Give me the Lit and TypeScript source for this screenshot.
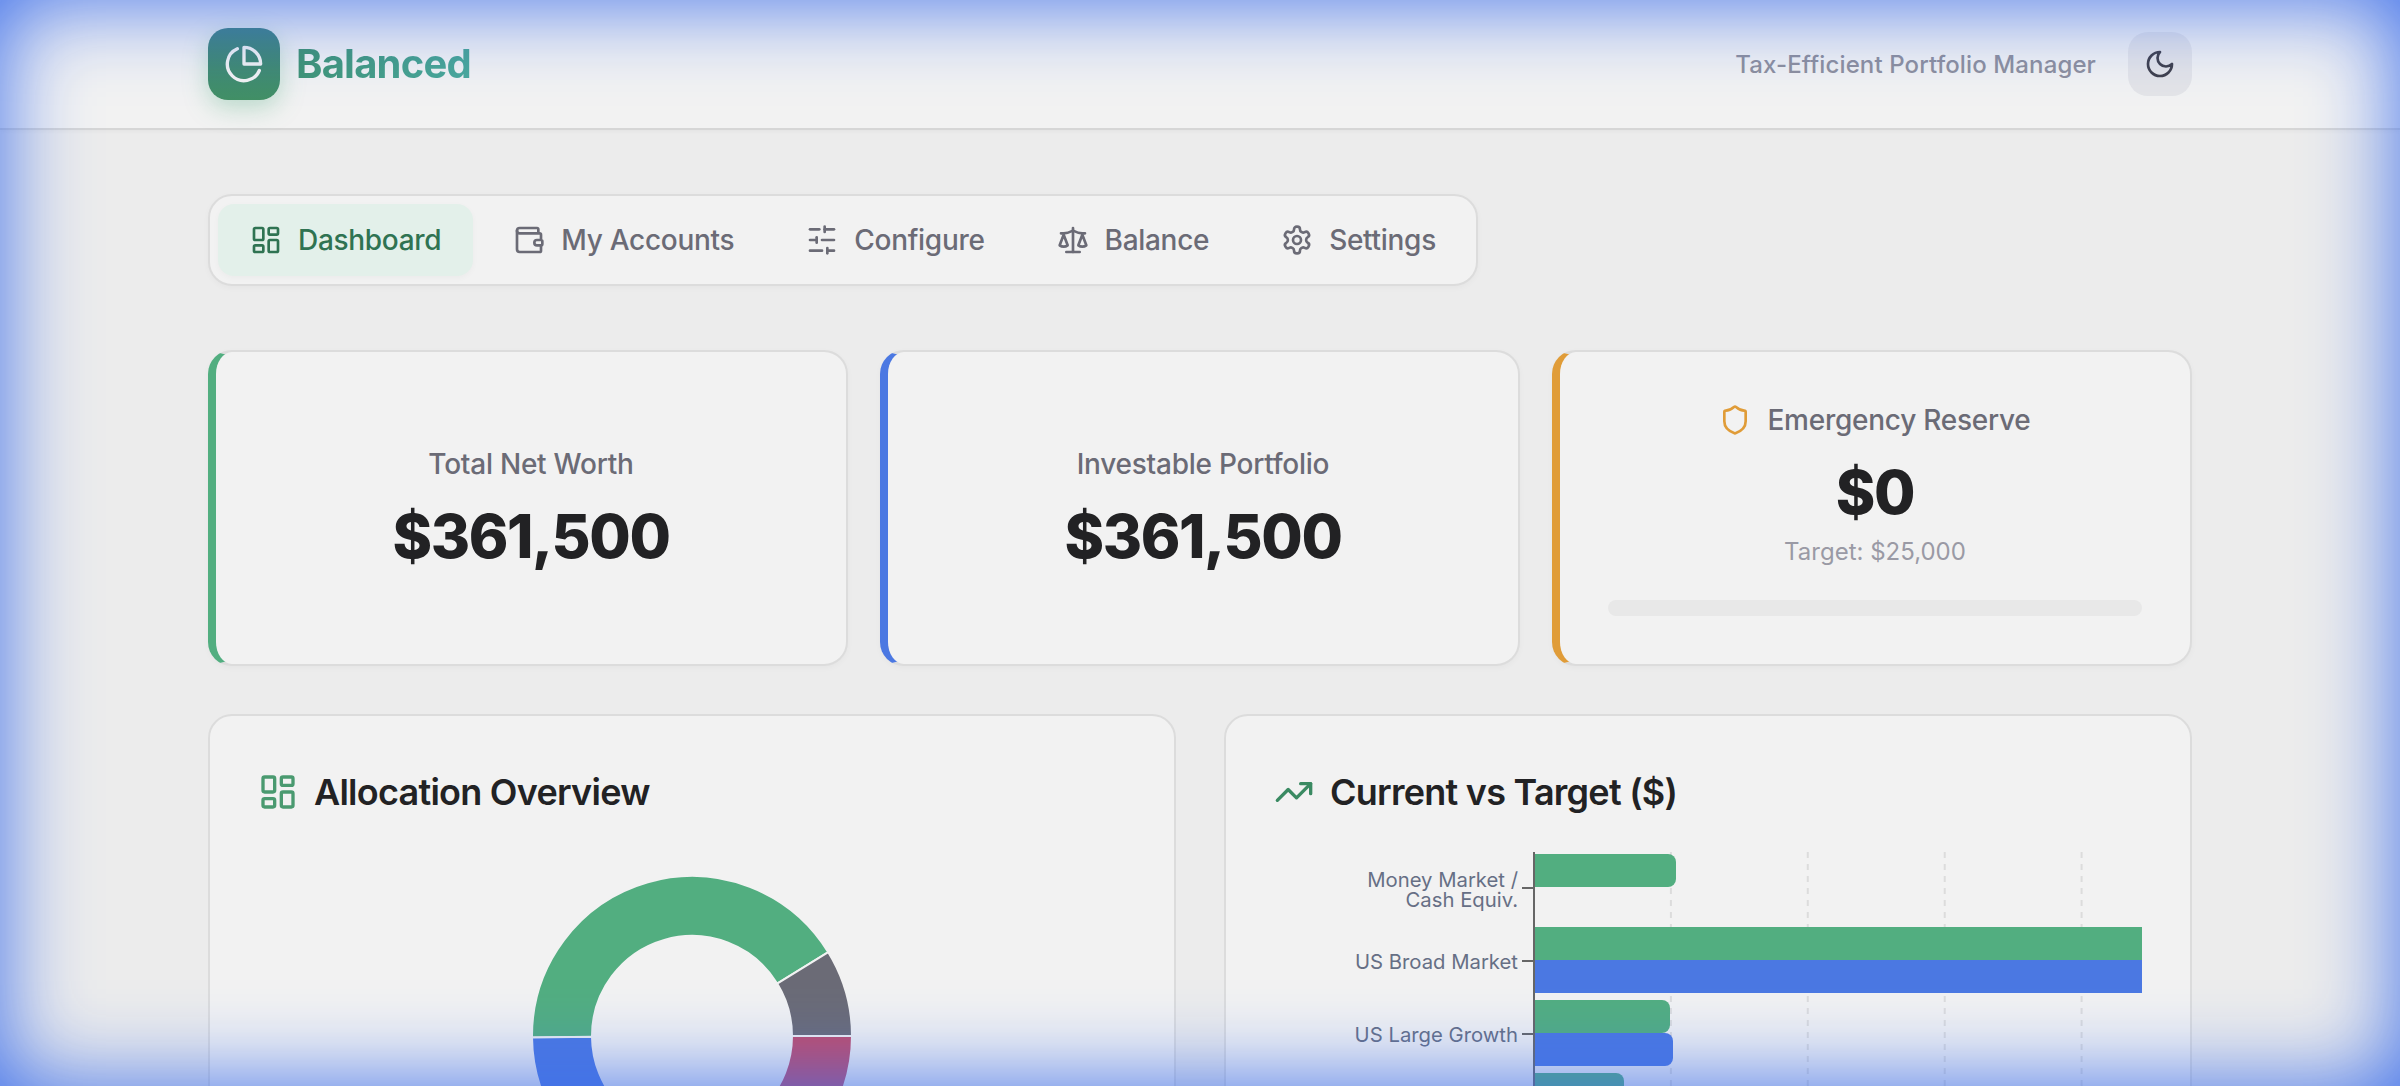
import { LitElement, css, html, svg } from 'lit';
import { customElement } from 'lit/decorators.js';

const ICONS = {
  dashboard: svg`<rect width="7" height="9" x="3" y="3" rx="1" /><rect width="7" height="5" x="14" y="3" rx="1" /><rect width="7" height="9" x="14" y="12" rx="1" /><rect width="7" height="5" x="3" y="16" rx="1" />`,
  wallet: svg`<path d="M19 7V4a1 1 0 0 0-1-1H5a2 2 0 0 0 0 4h15a1 1 0 0 1 1 1v4h-3a2 2 0 0 0 0 4h3a1 1 0 0 0 1-1v-2a1 1 0 0 0-1-1" /><path d="M3 5v14a2 2 0 0 0 2 2h15a1 1 0 0 0 1-1v-4" />`,
  sliders: svg`<line x1="21" x2="14" y1="4" y2="4" /><line x1="10" x2="3" y1="4" y2="4" /><line x1="21" x2="12" y1="12" y2="12" /><line x1="8" x2="3" y1="12" y2="12" /><line x1="21" x2="16" y1="20" y2="20" /><line x1="12" x2="3" y1="20" y2="20" /><line x1="14" x2="14" y1="2" y2="6" /><line x1="8" x2="8" y1="10" y2="14" /><line x1="16" x2="16" y1="18" y2="22" />`,
  scale: svg`<path d="m16 16 3-8 3 8c-.87.65-1.92 1-3 1s-2.13-.35-3-1Z" /><path d="m2 16 3-8 3 8c-.87.65-1.92 1-3 1s-2.13-.35-3-1Z" /><path d="M7 21h10" /><path d="M12 3v18" /><path d="M3 7h2c2 0 5-1 7-2 2 1 5 2 7 2h2" />`,
  settings: svg`<path d="M12.22 2h-.44a2 2 0 0 0-2 2v.18a2 2 0 0 1-1 1.73l-.43.25a2 2 0 0 1-2 0l-.15-.08a2 2 0 0 0-2.73.73l-.22.38a2 2 0 0 0 .73 2.73l.15.1a2 2 0 0 1 1 1.72v.51a2 2 0 0 1-1 1.74l-.15.09a2 2 0 0 0-.73 2.73l.22.38a2 2 0 0 0 2.73.73l.15-.08a2 2 0 0 1 2 0l.43.25a2 2 0 0 1 1 1.73V20a2 2 0 0 0 2 2h.44a2 2 0 0 0 2-2v-.18a2 2 0 0 1 1-1.73l.43-.25a2 2 0 0 1 2 0l.15.08a2 2 0 0 0 2.73-.73l.22-.39a2 2 0 0 0-.73-2.73l-.15-.08a2 2 0 0 1-1-1.74v-.5a2 2 0 0 1 1-1.74l.15-.09a2 2 0 0 0 .73-2.73l-.22-.38a2 2 0 0 0-2.73-.73l-.15.08a2 2 0 0 1-2 0l-.43-.25a2 2 0 0 1-1-1.73V4a2 2 0 0 0-2-2z" /><circle cx="12" cy="12" r="3" />`,
  moon: svg`<path d="M12 3a6 6 0 0 0 9 9 9 9 0 1 1-9-9Z" />`,
  shield: svg`<path d="M20 13c0 5-3.5 7.5-7.66 8.95a1 1 0 0 1-.67-.01C7.5 20.5 4 18 4 13V6a1 1 0 0 1 1-1c2 0 4.5-1.2 6.24-2.72a1.17 1.17 0 0 1 1.52 0C14.51 3.81 17 5 19 5a1 1 0 0 1 1 1z" />`,
  trending: svg`<polyline points="22 7 13.5 15.5 8.5 10.5 2 17" /><polyline points="16 7 22 7 22 13" />`,
  pie: svg`<path d="M21.21 15.89A10 10 0 1 1 8 2.83" /><path d="M22 12A10 10 0 0 0 12 2v10z" />`,
};

type IconName = keyof typeof ICONS;

const icon = (name: IconName, size: number) =>
  html`<svg
    class="icon"
    width=${size}
    height=${size}
    viewBox="0 0 24 24"
    fill="none"
    stroke="currentColor"
    stroke-width="2"
    stroke-linecap="round"
    stroke-linejoin="round"
  >
    ${ICONS[name]}
  </svg>`;

const NAV: { label: string; icon: IconName; active?: boolean }[] = [
  { label: 'Dashboard', icon: 'dashboard', active: true },
  { label: 'My Accounts', icon: 'wallet' },
  { label: 'Configure', icon: 'sliders' },
  { label: 'Balance', icon: 'scale' },
  { label: 'Settings', icon: 'settings' },
];

const GREEN = '#52ae80';
const BLUE = '#4b78e2';

// start and end angle in degrees, clockwise from north
const SLICES = [
  { color: GREEN, from: -90.5, to: 58.4 },
  { color: '#6b6b76', from: 58.4, to: 90 },
  { color: '#c04d6c', from: 90, to: 180 },
  { color: BLUE, from: 180, to: 269.5 },
];

const ROWS = [
  { label: ['Money Market /', 'Cash Equiv.'], current: 142, target: 0 },
  { label: ['US Broad Market'], current: 760, target: 760 },
  { label: ['US Large Growth'], current: 136, target: 139 },
  { label: [], current: 90, target: 66 },
];

const AXIS_X = 260;
const PLOT_W = 608;
const BAND = 73;
const BAR_H = 33;

const polar = (r: number, deg: number) => {
  const a = ((deg - 90) * Math.PI) / 180;
  return `${200 + r * Math.cos(a)} ${200 + r * Math.sin(a)}`;
};

const slicePath = (from: number, to: number) => {
  const R = 160;
  const r = 100;
  const large = to - from > 180 ? 1 : 0;
  return `M${polar(R, from)}A${R} ${R} 0 ${large} 1 ${polar(R, to)}L${polar(r, to)}A${r} ${r} 0 ${large} 0 ${polar(r, from)}Z`;
};

const barPath = (y: number, w: number) => {
  if (w >= PLOT_W) {
    return `M${AXIS_X} ${y}h${PLOT_W}v${BAR_H}h${-PLOT_W}Z`;
  }
  return `M${AXIS_X} ${y}h${w - 8}a8 8 0 0 1 8 8v${BAR_H - 16}a8 8 0 0 1-8 8h${8 - w}Z`;
};

@customElement('app-root')
export class AppRoot extends LitElement {
  renderDonut() {
    return html`<svg class="donut" width="400" height="400" viewBox="0 0 400 400">
      ${SLICES.map(
        (s) =>
          svg`<path d=${slicePath(s.from, s.to)} fill=${s.color} stroke="#f2f2f2" stroke-width="2" />`,
      )}
    </svg>`;
  }

  renderBars() {
    const height = ROWS.length * BAND + 10;
    return html`<svg class="bars" width="868" height=${height} viewBox="0 0 868 ${height}">
      ${[1, 2, 3, 4].map((i) => {
        const x = AXIS_X + i * 136.9;
        return svg`<line x1=${x} x2=${x} y1="0" y2=${height} stroke="#dcdcdc" stroke-width="2" stroke-dasharray="6 6" />`;
      })}
      ${ROWS.map((row, i) => {
        const top = i * BAND;
        const mid = top + 36;
        const textY = row.label.length > 1 ? mid - 1 : mid + 8;
        return svg`
          ${row.current ? svg`<path d=${barPath(top + 2, row.current)} fill=${GREEN} />` : ''}
          ${row.target ? svg`<path d=${barPath(top + 2 + BAR_H, row.target)} fill=${BLUE} />` : ''}
          <line x1=${AXIS_X - 12} x2=${AXIS_X} y1=${mid} y2=${mid} stroke="#666" stroke-width="2" />
          <text class="tick" y=${textY}>
            ${row.label.map(
              (line, n) => svg`<tspan x=${AXIS_X - 16} dy=${n ? 20 : 0}>${line}</tspan>`,
            )}
          </text>
        `;
      })}
      <line x1=${AXIS_X} x2=${AXIS_X} y1="0" y2=${height} stroke="#666" stroke-width="2" />
    </svg>`;
  }

  render() {
    return html`
      <header class="header">
        <div class="brand">
          <div class="brand__logo">${icon('pie', 40)}</div>
          <span class="brand__name">Balanced</span>
        </div>
        <div class="header__right">
          <span class="header__tagline">Tax-Efficient Portfolio Manager</span>
          <button class="theme-btn">${icon('moon', 32)}</button>
        </div>
      </header>

      <main class="main">
        <nav class="nav">
          ${NAV.map(
            (item) =>
              html`<a class="nav__item ${item.active ? 'nav__item--active' : ''}"
                >${icon(item.icon, 32)}<span>${item.label}</span></a
              >`,
          )}
        </nav>

        <section class="stats">
          <div class="stat stat--green">
            <div class="stat__label">Total Net Worth</div>
            <div class="stat__value">$361,500</div>
          </div>
          <div class="stat stat--blue">
            <div class="stat__label">Investable Portfolio</div>
            <div class="stat__value">$361,500</div>
          </div>
          <div class="stat stat--amber">
            <div class="stat__label stat__label--icon">${icon('shield', 32)}Emergency Reserve</div>
            <div class="stat__value">$0</div>
            <div class="stat__target">Target: $25,000</div>
            <div class="progress"></div>
          </div>
        </section>

        <section class="charts">
          <div class="panel">
            <h2 class="panel__title">
              <span class="panel__icon">${icon('dashboard', 40)}</span>Allocation Overview
            </h2>
            ${this.renderDonut()}
          </div>
          <div class="panel">
            <h2 class="panel__title">
              <span class="panel__icon panel__icon--dark">${icon('trending', 40)}</span>Current vs
              Target ($)
            </h2>
            <div class="panel__chart">${this.renderBars()}</div>
          </div>
        </section>
      </main>

      <div class="vignette"></div>
    `;
  }

  static styles = css`
    :host {
      display: block;
      height: 100vh;
      overflow: hidden;
      background: #ececec;
      color: #222224;
      font-family: Inter, 'Liberation Sans', sans-serif;
    }

    .icon {
      display: block;
      flex: none;
    }

    .header {
      display: flex;
      align-items: center;
      justify-content: space-between;
      padding: 28px 208px;
      background: #f2f2f2;
      border-bottom: 2px solid #d6d6d6;
      box-shadow: 0 2px 4px rgba(0, 0, 0, 0.03);
    }

    .brand {
      display: flex;
      align-items: center;
      gap: 16px;
    }

    .brand__logo {
      width: 72px;
      height: 72px;
      display: flex;
      align-items: center;
      justify-content: center;
      border-radius: 20px;
      color: #f2f2f2;
      background: linear-gradient(180deg, #3d8180, #429065);
      box-shadow: 0 8px 24px rgba(82, 174, 128, 0.35);
    }

    .brand__name {
      font-size: 40px;
      line-height: 56px;
      font-weight: 700;
      letter-spacing: -0.8px;
      background: linear-gradient(135deg, #3d8f6b, #4aaa9f);
      -webkit-background-clip: text;
      background-clip: text;
      color: transparent;
    }

    .header__right {
      display: flex;
      align-items: center;
      gap: 32px;
    }

    .header__tagline {
      font-size: 24px;
      letter-spacing: 0.12px;
      font-weight: 500;
      color: #8e8f9c;
    }

    .theme-btn {
      width: 64px;
      height: 64px;
      padding: 0;
      border: none;
      border-radius: 20px;
      display: flex;
      align-items: center;
      justify-content: center;
      background: #e4e4e7;
      color: #3f3f4a;
    }

    .main {
      padding: 64px 208px;
    }

    .nav {
      display: inline-flex;
      vertical-align: top;
      gap: 8px;
      padding: 8px;
      border: 2px solid #dcdcdc;
      border-radius: 24px;
      background: #f2f2f2;
      box-shadow: 0 2px 6px rgba(0, 0, 0, 0.03);
    }

    .nav__item {
      display: flex;
      align-items: center;
      gap: 16px;
      padding: 16px 32px;
      border-radius: 16px;
      font-size: 28px;
      letter-spacing: -0.3px;
      line-height: 40px;
      font-weight: 500;
      color: #6b6b76;
    }

    .nav__item--active {
      background: #e3f0ea;
      color: #2f7352;
      box-shadow: 0 2px 6px rgba(0, 0, 0, 0.03);
    }

    .stats {
      display: grid;
      grid-template-columns: repeat(3, 1fr);
      gap: 32px;
      margin-top: 64px;
    }

    .stat {
      display: flex;
      flex-direction: column;
      align-items: center;
      justify-content: center;
      height: 316px;
      box-sizing: border-box;
      padding: 48px;
      background: #f2f2f2;
      border: 2px solid #dcdcdc;
      border-radius: 24px;
      box-shadow: 0 2px 6px rgba(0, 0, 0, 0.03);
    }

    .stat--green {
      border-left: 8px solid #52ae80;
    }

    .stat--blue {
      border-left: 8px solid #4b78e2;
    }

    .stat--amber {
      border-left: 8px solid #e09c38;
    }

    .stat__label {
      display: flex;
      align-items: center;
      gap: 16px;
      font-size: 28px;
      letter-spacing: -0.25px;
      line-height: 40px;
      font-weight: 500;
      color: #6b6b76;
    }

    .stat__label--icon .icon {
      color: #e09c38;
    }

    .stat__value {
      margin-top: 16px;
      font-size: 60px;
      letter-spacing: -1.4px;
      line-height: 72px;
      font-weight: 800;
      color: #222224;
    }

    .stat__target {
      margin-top: 6px;
      font-size: 24px;
      line-height: 36px;
      color: #9a9aa5;
    }

    .progress {
      align-self: stretch;
      height: 16px;
      margin-top: 30px;
      border-radius: 8px;
      background: #e8e8e8;
    }

    .charts {
      display: grid;
      grid-template-columns: 1fr 1fr;
      gap: 48px;
      margin-top: 48px;
    }

    .panel {
      padding: 48px;
      min-width: 0;
      background: #f2f2f2;
      border: 2px solid #dcdcdc;
      border-radius: 24px;
    }

    .panel__title {
      display: flex;
      align-items: center;
      gap: 16px;
      margin: 0;
      font-size: 36px;
      letter-spacing: -0.75px;
      line-height: 56px;
      font-weight: 600;
      color: #222224;
    }

    .panel__icon {
      color: #4a9a70;
    }

    .panel__icon--dark {
      color: #3a8a62;
    }

    .panel__chart {
      margin-top: 32px;
    }

    .donut {
      display: block;
      margin: 16px auto 0;
    }

    .bars {
      display: block;
    }

    .tick {
      font-size: 20.3px;
      fill: #666f85;
      text-anchor: end;
    }

    .vignette {
      position: fixed;
      inset: 0;
      pointer-events: none;
      box-shadow: inset 0 0 88px rgb(60, 110, 235);
    }
  `;
}
